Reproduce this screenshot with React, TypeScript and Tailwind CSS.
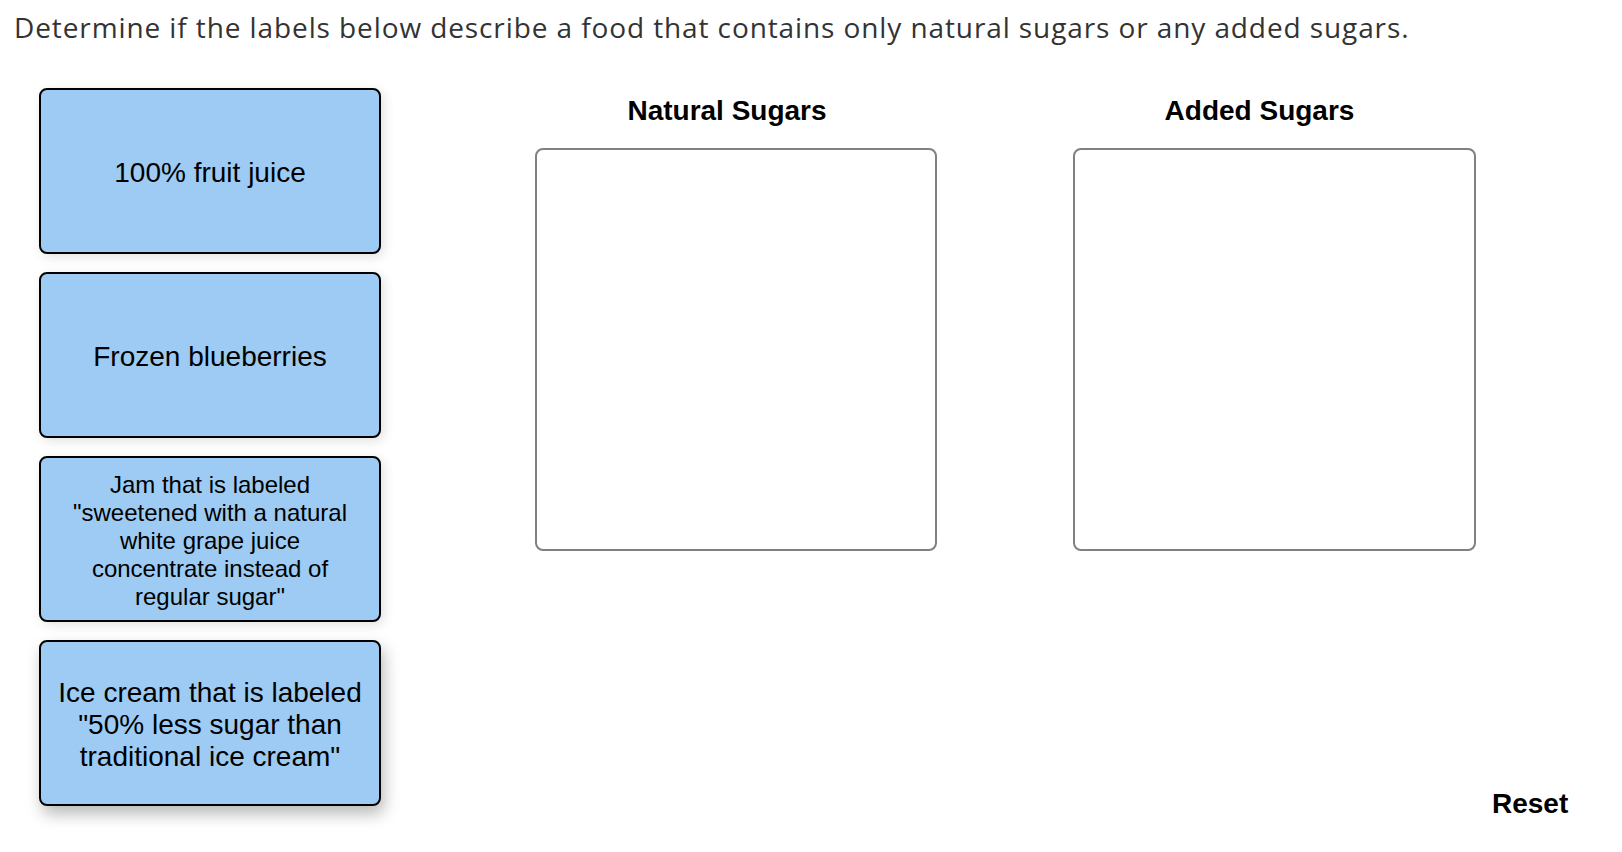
const items = [
  { label: '100% fruit juice', small: false },
  { label: 'Frozen blueberries', small: false },
  {
    label: 'Jam that is labeled "sweetened with a natural white grape juice concentrate instead of regular sugar"',
    small: true,
  },
  { label: 'Ice cream that is labeled "50% less sugar than traditional ice cream"', small: false },
];

const bins = [
  { title: 'Natural Sugars', pad: 'pr-[18px]', width: 'w-[402px]' },
  { title: 'Added Sugars', pad: 'pr-[30px]', width: 'w-[403px]' },
];

export default function App() {
  return (
    <div className="min-h-screen bg-white px-[14px] pt-[7px]">
      <p className="font-['Open_Sans',sans-serif] text-[28px] leading-[40px] tracking-[0.9px] text-[#333333]">
        Determine if the labels below describe a food that contains only natural sugars or any added sugars.
      </p>

      <div className="mt-[41px] flex items-start">
        <div className="ml-[25px] flex w-[342px] flex-col gap-[18px]">
          {items.map((item, i) => (
            <div
              key={i}
              className={`flex h-[166px] items-center justify-center rounded-lg border-2 border-black bg-[#9dcbf3] px-[16px] pt-[3px] text-center font-['Liberation_Sans',Arial,sans-serif] text-black ${
                item.small ? 'text-[24px] leading-[28px]' : 'text-[28px] leading-[32px]'
              } ${
                i === items.length - 1
                  ? 'shadow-[3px_8px_16px_rgba(0,0,0,0.28)]'
                  : 'shadow-[3px_3px_12px_rgba(0,0,0,0.12)]'
              }`}
            >
              {item.label}
            </div>
          ))}
        </div>

        <div className="ml-[154px] flex gap-[136px]">
          {bins.map((bin) => (
            <div key={bin.title} className="flex flex-col">
              <h3
                className={`mt-[7px] mb-[21px] text-center font-['Liberation_Sans',Arial,sans-serif] text-[28px] font-bold leading-[32px] text-black ${bin.pad}`}
              >
                {bin.title}
              </h3>
              <div className={`${bin.width} h-[403px] rounded-lg border-2 border-[#808080] bg-white`} />
            </div>
          ))}
        </div>

        <button className="ml-[16px] self-end -mb-[14px] font-['Liberation_Sans',Arial,sans-serif] text-[28px] font-bold leading-[32px] text-black">
          Reset
        </button>
      </div>
    </div>
  );
}
